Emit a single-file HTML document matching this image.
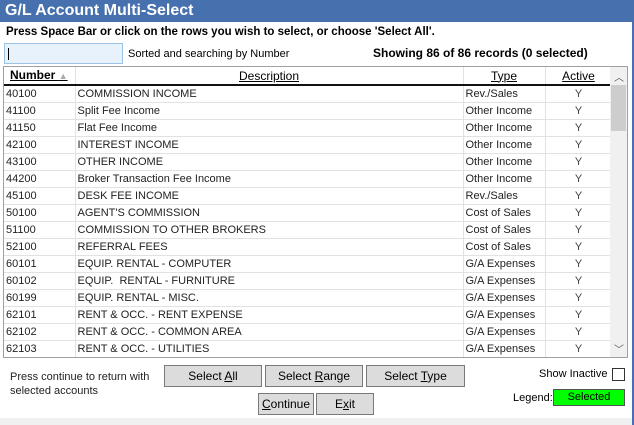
<!DOCTYPE html>
<html><head><style>
*{margin:0;padding:0;box-sizing:border-box}
body{width:634px;height:425px;background:#fff;font-family:"Liberation Sans",Arial,sans-serif;font-size:11px;color:#000;position:relative;overflow:hidden}
.title{position:absolute;left:0;top:0;width:632px;height:22px;background:#4670ae;color:#fff;font-weight:bold;font-size:16px;line-height:22px;padding-left:5px}
.rb{position:absolute;left:632px;top:0;width:2px;height:425px;background:#4670ae}
.abs{position:absolute}
.inp{left:4px;top:43px;width:119px;height:21px;background:#e8f2fc;border:1px solid #9cc2e6}
.inp:after{content:"";position:absolute;left:3px;top:4px;width:1px;height:12px;background:#000}
.tbl{left:3px;top:66px;width:625px;height:292px;border:1px solid #a0a0a0;background:#fff;overflow:hidden}
table{border-collapse:collapse;width:608px;table-layout:fixed}
td,th{height:17px;border:1px solid #e2e2e2;padding:0 2px;white-space:nowrap;overflow:hidden;font-size:11px;color:#222}
td:first-child,th:first-child{border-left:none}
tr:first-child th{border-top:none}
th{font-weight:normal;text-decoration:underline;font-size:12px;border-bottom:2px solid #111;height:18px;color:#000;line-height:14px}
td.c{text-align:center;color:#444}
.sb{position:absolute;right:0;top:0;width:17px;height:290px;background:#f0f0f0}
.thumb{position:absolute;left:1px;top:18px;width:15px;height:46px;background:#cdcdcd}
.btn{position:absolute;height:22px;background:#dcdcdc;border:1px solid #7a7a7a;text-align:center;line-height:20px;font-size:12px}
.bot{position:absolute;left:0;top:418px;width:632px;height:7px;background:#f0f0f0}
</style></head><body>
<div class="title">G/L Account Multi-Select</div>
<div class="rb"></div>
<div class="abs" style="left:6px;top:26px;font-weight:bold;font-size:11.5px">Press Space Bar or click on the rows you wish to select, or choose 'Select All'.</div>
<div class="abs inp"></div>
<div class="abs" style="left:128px;top:48px">Sorted and searching by Number</div>
<div class="abs" style="left:373px;top:46px;font-weight:bold;font-size:12px">Showing 86 of 86 records (0 selected)</div>
<div class="abs tbl">
<table>
<colgroup><col style="width:71px"><col style="width:388px"><col style="width:82px"><col style="width:67px"></colgroup>
<tr><th style="text-align:left;font-weight:bold;padding-left:6px">Number <span style="text-decoration:none;color:#aaa;font-size:9px">▲</span></th><th>Description</th><th>Type</th><th>Active</th></tr>
<tr><td>40100</td><td>COMMISSION INCOME</td><td>Rev./Sales</td><td class="c">Y</td></tr>
<tr><td>41100</td><td>Split Fee Income</td><td>Other Income</td><td class="c">Y</td></tr>
<tr><td>41150</td><td>Flat Fee Income</td><td>Other Income</td><td class="c">Y</td></tr>
<tr><td>42100</td><td>INTEREST INCOME</td><td>Other Income</td><td class="c">Y</td></tr>
<tr><td>43100</td><td>OTHER INCOME</td><td>Other Income</td><td class="c">Y</td></tr>
<tr><td>44200</td><td>Broker Transaction Fee Income</td><td>Other Income</td><td class="c">Y</td></tr>
<tr><td>45100</td><td>DESK FEE INCOME</td><td>Rev./Sales</td><td class="c">Y</td></tr>
<tr><td>50100</td><td>AGENT'S COMMISSION</td><td>Cost of Sales</td><td class="c">Y</td></tr>
<tr><td>51100</td><td>COMMISSION TO OTHER BROKERS</td><td>Cost of Sales</td><td class="c">Y</td></tr>
<tr><td>52100</td><td>REFERRAL FEES</td><td>Cost of Sales</td><td class="c">Y</td></tr>
<tr><td>60101</td><td>EQUIP. RENTAL - COMPUTER</td><td>G/A Expenses</td><td class="c">Y</td></tr>
<tr><td>60102</td><td>EQUIP.&nbsp; RENTAL - FURNITURE</td><td>G/A Expenses</td><td class="c">Y</td></tr>
<tr><td>60199</td><td>EQUIP. RENTAL - MISC.</td><td>G/A Expenses</td><td class="c">Y</td></tr>
<tr><td>62101</td><td>RENT &amp; OCC. - RENT EXPENSE</td><td>G/A Expenses</td><td class="c">Y</td></tr>
<tr><td>62102</td><td>RENT &amp; OCC. - COMMON AREA</td><td>G/A Expenses</td><td class="c">Y</td></tr>
<tr><td>62103</td><td>RENT &amp; OCC. - UTILITIES</td><td>G/A Expenses</td><td class="c">Y</td></tr>
</table>
<div class="sb"><div class="abs" style="left:4px;top:2px;font-size:10px;color:#555">︿</div><div class="thumb"></div><div class="abs" style="left:4px;top:274px;font-size:10px;color:#555">﹀</div></div>
</div>
<div class="abs" style="left:10px;top:370px;line-height:14px;color:#222">Press continue to return with<br>selected accounts</div>
<div class="btn" style="left:164px;top:365px;width:98px">Select <u>A</u>ll</div>
<div class="btn" style="left:265px;top:365px;width:98px">Select <u>R</u>ange</div>
<div class="btn" style="left:366px;top:365px;width:99px">Select <u>T</u>ype</div>
<div class="btn" style="left:258px;top:393px;width:56px"><u>C</u>ontinue</div>
<div class="btn" style="left:316px;top:393px;width:58px">E<u>x</u>it</div>
<div class="abs" style="left:539px;top:368px">Show Inactive</div>
<div class="abs" style="left:612px;top:368px;width:13px;height:13px;border:1px solid #333;background:#fff"></div>
<div class="abs" style="left:513px;top:392px">Legend:</div>
<div class="abs" style="left:553px;top:389px;width:72px;height:17px;background:#00ff00;border:1px solid #555;text-align:center;line-height:15px">Selected</div>
<div class="bot"></div>
</body></html>
